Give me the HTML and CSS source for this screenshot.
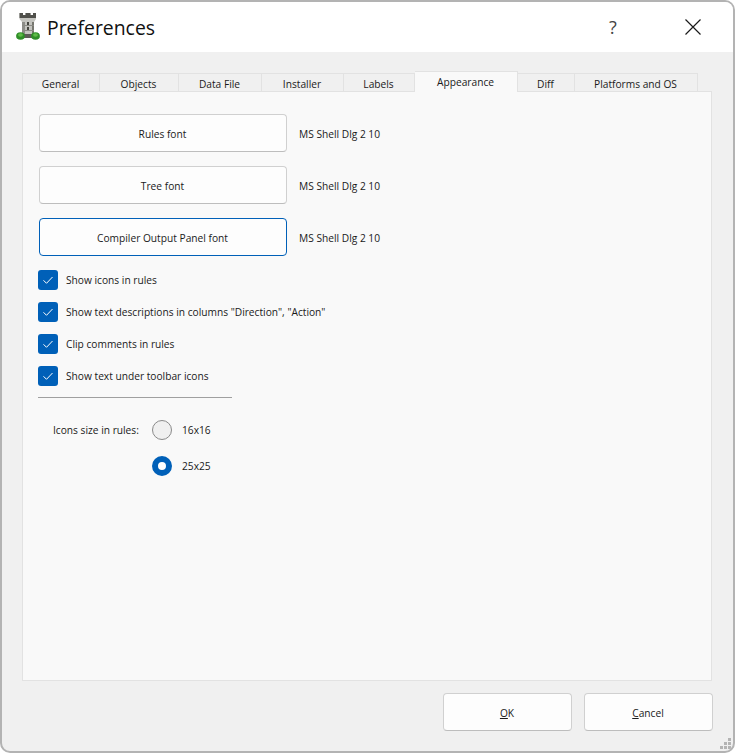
FILE: index.html
```html
<!DOCTYPE html>
<html lang="en">
<head>
    <meta charset="UTF-8">
    <title>Preferences</title>
    <link rel="stylesheet" href="styles.css">
</head>
<body>
    <div class="window">
        <div class="titlebar">
            <svg class="app-icon" width="24" height="28" viewBox="0 0 24 28">
                <path d="M3.5 1h3.500v2h2.500V1h5v2h2.500V1h3v6l-2 3v12H6V10L3.500 7z" fill="#c4c4bf"/>
                <path d="M3.500 1h3.500v2h2.500V1h5v2h2.500V1h3v5H3.500z" fill="#50504b"/>
                <path d="M6 10h3v12H6z" fill="#8d8d88"/>
                <path d="M16 10h2v12h-2z" fill="#77776f"/>
                <path d="M6 13h12v1H6zM6 18h12v1H6z" fill="#8a8a84"/>
                <rect x="11" y="10" width="2" height="3" fill="#45453f"/>
                <rect x="11" y="15" width="2" height="3" fill="#45453f"/>
                <path d="M6 22h12v4H6z" fill="#5c5c56"/>
                <ellipse cx="4.500" cy="24" rx="4.400" ry="3.800" fill="#2f8f28"/>
                <ellipse cx="19.500" cy="24" rx="4.400" ry="3.800" fill="#2f8f28"/>
                <ellipse cx="4.500" cy="23" rx="2.400" ry="1.700" fill="#5fbb48"/>
                <ellipse cx="19.500" cy="23" rx="2.400" ry="1.700" fill="#5fbb48"/>
            </svg>
            <div class="title">Preferences</div>
            <div class="help">?</div>
            <svg class="close" width="16" height="16" viewBox="0 0 16 16">
                <path d="M.5.5l15 15M15.500.5l-15 15" stroke="#1a1a1a" stroke-width="1.2" fill="none"/>
            </svg>
        </div>

        <div class="content">
            <div class="tabs">
                <div class="tab">General</div>
                <div class="tab">Objects</div>
                <div class="tab">Data File</div>
                <div class="tab">Installer</div>
                <div class="tab">Labels</div>
                <div class="tab active">Appearance</div>
                <div class="tab">Diff</div>
                <div class="tab">Platforms and OS</div>
            </div>

            <div class="panel">
                <div class="font-row">
                    <button class="btn font-btn">Rules font</button>
                    <span class="font-name">MS Shell Dlg 2 10</span>
                </div>
                <div class="font-row">
                    <button class="btn font-btn">Tree font</button>
                    <span class="font-name">MS Shell Dlg 2 10</span>
                </div>
                <div class="font-row">
                    <button class="btn font-btn focused">Compiler Output Panel font</button>
                    <span class="font-name">MS Shell Dlg 2 10</span>
                </div>

                <div class="checks">
                    <div class="check">
                        <svg class="checkbox" width="20" height="20" viewBox="0 0 20 20"><rect width="20" height="20" rx="3" fill="#0060b8"/><path d="M5.500 10.300l3 3 6-6.300" stroke="#fff" fill="none"/></svg>
                        <span>Show icons in rules</span>
                    </div>
                    <div class="check">
                        <svg class="checkbox" width="20" height="20" viewBox="0 0 20 20"><rect width="20" height="20" rx="3" fill="#0060b8"/><path d="M5.500 10.300l3 3 6-6.300" stroke="#fff" fill="none"/></svg>
                        <span>Show text descriptions in columns "Direction", "Action"</span>
                    </div>
                    <div class="check">
                        <svg class="checkbox" width="20" height="20" viewBox="0 0 20 20"><rect width="20" height="20" rx="3" fill="#0060b8"/><path d="M5.500 10.300l3 3 6-6.300" stroke="#fff" fill="none"/></svg>
                        <span>Clip comments in rules</span>
                    </div>
                    <div class="check">
                        <svg class="checkbox" width="20" height="20" viewBox="0 0 20 20"><rect width="20" height="20" rx="3" fill="#0060b8"/><path d="M5.500 10.300l3 3 6-6.300" stroke="#fff" fill="none"/></svg>
                        <span>Show text under toolbar icons</span>
                    </div>
                </div>

                <div class="separator"></div>

                <div class="size-group">
                    <div class="size-label">Icons size in rules:</div>
                    <div class="radios">
                        <div class="radio-row">
                            <span class="radio"></span>
                            <span>16x16</span>
                        </div>
                        <div class="radio-row">
                            <span class="radio on"></span>
                            <span>25x25</span>
                        </div>
                    </div>
                </div>
            </div>

            <div class="footer">
                <button class="btn footer-btn"><u>O</u>K</button>
                <button class="btn footer-btn"><u>C</u>ancel</button>
            </div>
        </div>

        <svg class="grip" width="12" height="12" viewBox="0 0 12 12" fill="#b4b4b4">
            <rect x="8" y="0" width="3" height="3"/>
            <rect x="4" y="4" width="3" height="3"/>
            <rect x="8" y="4" width="3" height="3"/>
            <rect x="0" y="8" width="3" height="3"/>
            <rect x="4" y="8" width="3" height="3"/>
            <rect x="8" y="8" width="3" height="3"/>
        </svg>
    </div>
</body>
</html>
```

FILE: styles.css
```css
* {
    margin: 0;
    padding: 0;
    box-sizing: border-box;
}

body {
    width: 735px;
    height: 753px;
    overflow: hidden;
    background: #fff;
    font-family: "Open Sans", "Noto Sans", sans-serif;
    font-size: 10.2px;
    color: #1a1a1a;
}

.window {
    position: relative;
    width: 735px;
    height: 753px;
    display: flex;
    flex-direction: column;
    background: #f0f0f0;
    border: 2px solid #b3b3b3;
    border-radius: 10px;
    overflow: hidden;
}

.titlebar {
    height: 50px;
    flex: none;
    display: flex;
    align-items: center;
    background: #fff;
    padding-left: 14px;
}

.app-icon {
    flex: none;
    margin: 0 7px 2px 0;
}

.title {
    font-size: 19.4px;
    flex: 1;
    color: #111;
}

.help {
    font-size: 18px;
    width: 14px;
    text-align: center;
    color: #444;
    margin-right: 65px;
}

.close {
    margin-right: 32px;
}

.content {
    flex: 1;
    display: flex;
    flex-direction: column;
    padding: 19px 21px 0 20px;
}

.tabs {
    display: grid;
    grid-template-columns: 78px 79px 83px 82px 71px 103px 57px 123px;
    align-items: end;
    height: 20px;
    position: relative;
    z-index: 1;
}

.tab {
    height: 18px;
    background: #f0f0f0;
    border: 1px solid #e2e2e2;
    border-left-width: 0;
    border-bottom: 0;
    padding-right: 1px;
    text-align: center;
    line-height: 20px;
    white-space: nowrap;
}

.tab:first-child {
    border-left-width: 1px;
}

.tab.active {
    height: 21px;
    margin-bottom: -1px;
    background: #f9f9f9;
    line-height: 20px;
}

.panel {
    height: 590px;
    flex: none;
    background: #f9f9f9;
    border: 1px solid #e2e2e2;
    padding: 22px 16px 0 16px;
}

.font-row {
    display: flex;
    align-items: center;
    gap: 12px;
    margin-bottom: 14px;
}

.font-name {
    padding-top: 1px;
}

.btn {
    font: inherit;
    color: inherit;
    background: #fdfdfd;
    border: 1px solid #d0d0d0;
    border-bottom-color: #bdbdbd;
    border-radius: 4px;
    padding: 1px 1px 0 0;
}

.font-btn {
    width: 248px;
    height: 38px;
}

.font-btn.focused {
    border-color: #0060b8;
}

.checks {
    display: flex;
    flex-direction: column;
    gap: 12px;
    margin-top: 14px;
}

.check {
    display: flex;
    align-items: center;
    gap: 8px;
    height: 20px;
    margin-left: -1px;
}

.checkbox {
    flex: none;
}

.separator {
    width: 194px;
    height: 1px;
    margin: 11px 0 0 -1px;
    background: #a0a0a0;
}

.size-group {
    display: flex;
    margin: 22px 0 0 14px;
}

.size-label {
    width: 99px;
    line-height: 20px;
}

.radios {
    display: flex;
    flex-direction: column;
    gap: 16px;
}

.radio-row {
    display: flex;
    align-items: center;
    gap: 10px;
    height: 20px;
}

.radio {
    width: 20px;
    height: 20px;
    flex: none;
    border-radius: 50%;
    background: #f0f0f0;
    border: 1px solid #8a8a8a;
}

.radio.on {
    background: #fff;
    border: 6px solid #0060b8;
}

.footer {
    display: flex;
    justify-content: flex-end;
    gap: 12px;
    padding-top: 12px;
    margin-right: -1px;
}

.footer-btn {
    width: 129px;
    height: 38px;
}

.grip {
    position: absolute;
    right: 1px;
    bottom: 1px;
}
```
